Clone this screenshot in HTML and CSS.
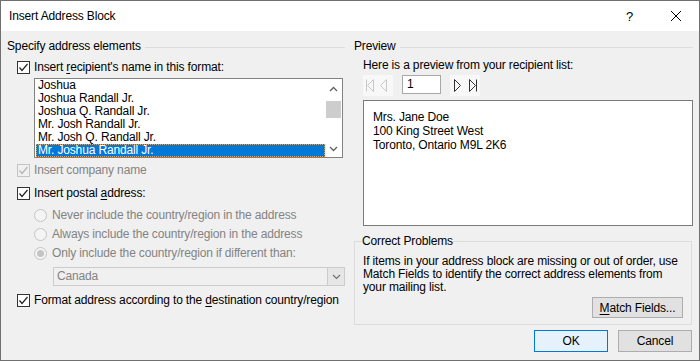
FILE: index.html
```html
<!DOCTYPE html>
<html lang="en">
  <head>
    <meta charset="UTF-8" />
    <title>Insert Address Block</title>
    <link rel="stylesheet" href="styles.css">
  </head>
  <body>
    <div class="dialog">
      <div class="titlebar">
        <span class="title">Insert Address Block</span>
        <span class="help">?</span>
        <svg class="close" width="12" height="12" viewBox="0 0 12 12">
          <path d="M1 1 L11 11 M11 1 L1 11" stroke="#000" stroke-width="1" fill="none" />
        </svg>
      </div>

      <div class="content">
        <!-- venstre kolonne -->
        <div class="left">
          <div class="legend"><span>Specify address elements</span><i></i></div>

          <label class="check first">
            <span class="box"><svg width="11" height="11" viewBox="0 0 11 11"><path d="M1.5 5.5 L4 8.5 L9.5 2" /></svg></span>
            <span>Insert <u>r</u>ecipient's name in this format:</span>
          </label>

          <div class="listbox">
            <ul>
              <li>Joshua</li>
              <li>Joshua Randall Jr.</li>
              <li>Joshua Q. Randall Jr.</li>
              <li>Mr. Josh Randall Jr.</li>
              <li>Mr. Josh Q. Randall Jr.</li>
              <li class="selected">Mr. Joshua Randall Jr.</li>
            </ul>
            <div class="scrollbar">
              <svg width="9" height="6" viewBox="0 0 9 6"><path d="M1 5 L4.5 1.5 L8 5" /></svg>
              <div class="thumb"></div>
              <svg class="down" width="9" height="6" viewBox="0 0 9 6"><path d="M1 1 L4.5 4.5 L8 1" /></svg>
            </div>
          </div>

          <label class="check disabled company">
            <span class="box"><svg width="11" height="11" viewBox="0 0 11 11"><path d="M1.5 5.5 L4 8.5 L9.5 2" /></svg></span>
            <span>Insert company name</span>
          </label>

          <label class="check postal">
            <span class="box"><svg width="11" height="11" viewBox="0 0 11 11"><path d="M1.5 5.5 L4 8.5 L9.5 2" /></svg></span>
            <span>Insert postal <u>a</u>ddress:</span>
          </label>

          <label class="radio"><span class="circle"></span><span>Never include the country/region in the address</span></label>
          <label class="radio"><span class="circle"></span><span>Always include the country/region in the address</span></label>
          <label class="radio"><span class="circle on"></span><span>Only include the country/region if different than:</span></label>

          <div class="combo">
            <span>Canada</span>
            <span class="arrow"><svg width="9" height="6" viewBox="0 0 9 6"><path d="M1 1 L4.5 4.5 L8 1" /></svg></span>
          </div>

          <label class="check format">
            <span class="box"><svg width="11" height="11" viewBox="0 0 11 11"><path d="M1.5 5.5 L4 8.5 L9.5 2" /></svg></span>
            <span>Format address according to the <u>d</u>estination country/region</span>
          </label>
        </div>

        <!-- højre kolonne -->
        <div class="right">
          <div class="legend"><span>Preview</span><i></i></div>
          <p class="intro">Here is a preview from your recipient list:</p>

          <div class="nav">
            <span class="navbtn off">
              <svg width="30" height="21" viewBox="0 0 30 21">
                <path d="M3.5 4.5 V16.5 M10.5 4.5 L4.5 10.5 L10.5 16.5 Z M23.5 4.5 L17.5 10.5 L23.5 16.5 Z" />
              </svg>
            </span>
            <span class="record">1</span>
            <span class="navbtn">
              <svg width="30" height="21" viewBox="0 0 30 21">
                <path d="M4.5 4.5 L10.5 10.5 L4.5 16.5 Z M19.5 4.5 L25.5 10.5 L19.5 16.5 Z M26.5 4.5 V16.5" />
              </svg>
            </span>
          </div>

          <div class="preview">
            <p>Mrs. Jane Doe</p>
            <p>100 King Street West</p>
            <p>Toronto, Ontario M9L 2K6</p>
          </div>

          <fieldset class="problems">
            <legend>Correct Problems</legend>
            <p>If items in your address block are missing or out of order, use Match Fields to identify the correct address elements from your mailing list.</p>
            <div class="match"><button><u>M</u>atch Fields...</button></div>
          </fieldset>

          <div class="buttons">
            <button class="ok">OK</button>
            <button>Cancel</button>
          </div>
        </div>
      </div>
    </div>
  </body>
</html>
```

FILE: styles.css
```css
* {
  box-sizing: border-box;
}

body {
  margin: 0;
  font-family: "Liberation Sans", Arial, sans-serif;
  font-size: 12px;
  line-height: 15px;
  letter-spacing: -0.15px;
  color: #000;
}

p {
  margin: 0;
}

u {
  text-decoration-thickness: 1px;
  text-underline-offset: 2px;
}

.dialog {
  width: 700px;
  height: 361px;
  border: 1px solid #707070;
  display: flex;
  flex-direction: column;
  background: #f0f0f0;
}

.titlebar {
  height: 30px;
  background: #fff;
  display: flex;
  align-items: center;
  padding-left: 8px;
}
.title {
  flex: 1;
}
.help {
  margin-right: 37px;
  font-size: 13px;
}
.close {
  margin-right: 17px;
}

.content {
  flex: 1;
  display: flex;
  gap: 9px;
  padding: 8px 6px 0 6px;
}

.left {
  width: 339px;
}
.right {
  width: 339px;
}

.legend {
  display: flex;
  align-items: center;
  gap: 4px;
}
.legend i {
  flex: 1;
  border-top: 1px solid #dcdcdc;
  margin-top: 1px;
}

/* checkbokse */
.check {
  display: flex;
  align-items: center;
  gap: 4px;
  margin-left: 10px;
  height: 15px;
}
.box {
  width: 13px;
  height: 13px;
  border: 1px solid #333;
  background: #fff;
  display: flex;
  align-items: center;
  justify-content: center;
}
.box svg path {
  fill: none;
  stroke: #222;
  stroke-width: 1.2;
}
.check.first {
  margin-top: 6px;
}
.check.disabled {
  color: #838383;
}
.check.disabled .box {
  border-color: #c4c4c4;
  background: #f0f0f0;
}
.check.disabled .box svg path {
  stroke: #b4b4b4;
}
.check.company {
  margin-top: 5px;
}
.check.postal {
  margin-top: 8px;
}
.check.format {
  margin-top: 7px;
}

/* listen */
.listbox {
  margin: 3px 0 0 27px;
  width: 309px;
  height: 80px;
  border: 1px solid #828282;
  background: #fff;
  display: flex;
}
.listbox ul {
  flex: 1;
  list-style: none;
  margin: 0;
  padding: 0 0 0 1px;
}
.listbox li {
  height: 13px;
  line-height: 13px;
  padding-left: 2px;
}
.listbox li.selected {
  background: #0078d7;
  color: #fff;
  outline: 1px dotted #f0a040;
  outline-offset: -1px;
}
.scrollbar {
  width: 17px;
  display: flex;
  flex-direction: column;
  align-items: center;
  padding-top: 7px;
}
.scrollbar svg path {
  fill: none;
  stroke: #606060;
  stroke-width: 1.3;
}
.thumb {
  width: 15px;
  height: 17px;
  background: #cdcdcd;
  margin-top: 9px;
}
.scrollbar .down {
  margin-top: auto;
  margin-bottom: 5px;
}

/* radioknapper */
.radio {
  display: flex;
  align-items: center;
  gap: 5px;
  margin: 4px 0 0 27px;
  height: 15px;
  color: #838383;
}
.postal + .radio {
  margin-top: 7px;
}
.circle {
  width: 13px;
  height: 13px;
  border: 1px solid #c4c4c4;
  border-radius: 50%;
  background: #f4f4f4;
  display: flex;
  align-items: center;
  justify-content: center;
}
.circle.on::after {
  content: "";
  width: 7px;
  height: 7px;
  border-radius: 50%;
  background: #c4c4c4;
}

.combo {
  margin: 6px 0 0 46px;
  width: 292px;
  height: 19px;
  border: 1px solid #cccccc;
  display: flex;
  align-items: center;
  color: #838383;
  padding-left: 3px;
}
.combo span:first-child {
  flex: 1;
}
.combo .arrow {
  width: 17px;
  height: 17px;
  background: #e6e6e6;
  border-left: 1px solid #cccccc;
  display: flex;
  align-items: center;
  justify-content: center;
}
.combo .arrow path {
  fill: none;
  stroke: #707070;
  stroke-width: 1.2;
}

/* preview */
.intro {
  margin: 4px 0 0 9px;
}
.nav {
  display: flex;
  align-items: flex-start;
  gap: 9px;
  margin: 2px 0 0 9px;
  height: 21px;
}
.navbtn {
  width: 30px;
  height: 21px;
  background: #f8f8f8;
}
.navbtn path {
  fill: none;
  stroke: #333;
  stroke-width: 1;
}
.navbtn.off path {
  stroke: #c8c8c8;
}
.record {
  width: 39px;
  height: 19px;
  border: 1px solid #a8a8a8;
  background: #fff;
  padding-left: 4px;
  line-height: 17px;
}
.preview {
  margin: 4px 0 0 9px;
  width: 330px;
  height: 126px;
  border: 1px solid #7a7a7a;
  background: #fff;
  padding: 9px 0 0 9px;
  line-height: 14px;
}

.problems {
  margin: 8px 0 0 0;
  width: 338px;
  border: 1px solid #dcdcdc;
  padding: 0 8px 6px 8px;
}
.problems legend {
  padding: 0;
  margin-left: -1px;
}
.problems p {
  margin: 6px 0 0 0;
  line-height: 13px;
}
.match {
  display: flex;
  justify-content: flex-end;
  margin-top: 3px;
}

button {
  font-family: inherit;
  font-size: 12px;
  letter-spacing: -0.15px;
  color: #000;
  background: #e1e1e1;
  border: 1px solid #adadad;
  height: 21px;
  padding: 0;
}
.match button {
  width: 91px;
}
.buttons {
  display: flex;
  justify-content: flex-end;
  gap: 10px;
  margin: 5px 1px 0 0;
}
.buttons button {
  width: 74px;
  height: 22px;
}
.buttons .ok {
  background: #e5f1fb;
  border-color: #0078d7;
}
```
